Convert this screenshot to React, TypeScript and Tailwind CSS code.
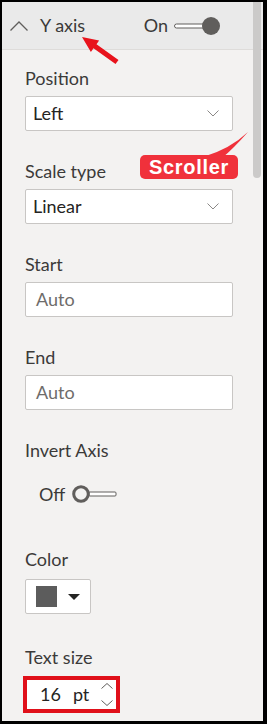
import React from 'react';

const Chevron = ({ className = '' }: { className?: string }) => (
  <svg width="12" height="7" viewBox="0 0 12 7" className={className}>
    <path d="M0.5 0.5 L6 6 L11.5 0.5" fill="none" stroke="#8a8886" strokeWidth="1" />
  </svg>
);

const Label = ({ text, className = '' }: { text: string; className?: string }) => (
  <div className={`h-6 leading-6 text-[18px] text-[#3b3a39] ${className}`}>{text}</div>
);

const Select = ({ value }: { value: string }) => (
  <div className="mt-[6px] w-[208px] h-[35px] bg-white border border-[#c8c6c4] rounded-[2px] flex items-center pl-[7px] pr-[13px]">
    <span className="text-[18px] text-[#252423]">{value}</span>
    <Chevron className="ml-auto" />
  </div>
);

const Input = ({ placeholder }: { placeholder: string }) => (
  <div className="mt-[6px] w-[208px] h-[35px] bg-white border border-[#c8c6c4] rounded-[2px] flex items-center pl-[10px]">
    <span className="text-[18px] text-[#6e6c6a]">{placeholder}</span>
  </div>
);

export default function App() {
  return (
    <div className="w-[267px] h-[724px] relative overflow-hidden bg-[#f3f2f1] border-black border-t-2 border-l-2 border-r-4 border-b-[3px] font-['Lato','Open_Sans',sans-serif]">
      {/* header */}
      <div className="h-[48px] flex items-center bg-[#eaeaea] border-b border-[#dedcda] pl-[8px] pr-[43px]">
        <svg width="18" height="10" viewBox="0 0 18 10">
          <path d="M0.5 9.5 L9 1 L17.5 9.5" fill="none" stroke="#605e5c" strokeWidth="1.3" />
        </svg>
        <span className="ml-3 text-[18px] text-[#3b3a39]">Y axis</span>
        <span className="ml-auto text-[18px] text-[#3b3a39]">On</span>
        <svg width="46" height="18" viewBox="0 0 46 18" className="ml-[6px]">
          <rect x="0.5" y="7" width="32" height="4" rx="2" fill="#fff" stroke="#605e5c" strokeWidth="1" />
          <circle cx="37" cy="9" r="9" fill="#605e5c" />
        </svg>
      </div>

      {/* body */}
      <div className="pl-[23px] pt-[16px]">
        <Label text="Position" />
        <Select value="Left" />

        <Label text="Scale type" className="mt-[28px]" />
        <Select value="Linear" />

        <Label text="Start" className="mt-[28px]" />
        <Input placeholder="Auto" />

        <Label text="End" className="mt-[28px]" />
        <Input placeholder="Auto" />

        <Label text="Invert Axis" className="mt-[28px]" />
        <div className="mt-[20px] h-6 flex items-center pl-[14px]">
          <span className="text-[18px] text-[#3b3a39]">Off</span>
          <svg width="45" height="18" viewBox="0 0 45 18" className="ml-[7px]">
            <rect x="17" y="7" width="27" height="4" rx="1" fill="#fff" stroke="#605e5c" strokeWidth="1" />
            <circle cx="9" cy="9" r="7.3" fill="#f3f2f1" stroke="#605e5c" strokeWidth="3" />
          </svg>
        </div>

        <Label text="Color" className="mt-[41px]" />
        <div className="mt-[8px] w-[66px] h-[35px] bg-white border border-[#c8c6c4] rounded-[2px] flex items-center pl-[10px]">
          <div className="w-[21px] h-[21px] bg-[#5c5c5c]" />
          <svg width="12" height="6" viewBox="0 0 12 6" className="ml-[11px]">
            <path d="M0 0 H12 L6 6 Z" fill="#252423" />
          </svg>
        </div>

        <Label text="Text size" className="mt-[31px]" />
        <div className="mt-[7px] -ml-[2px] w-[97px] h-[37px] bg-white border-4 border-[#e0101a] flex items-center pl-[13px]">
          <span className="text-[18px] text-[#252423]">16</span>
          <span className="ml-[12px] text-[18px] text-[#252423]">pt</span>
          <div className="ml-auto mr-[3px] flex flex-col gap-[11px]">
            <svg width="12" height="6" viewBox="0 0 12 6">
              <path d="M0.5 5.5 L6 0.5 L11.5 5.5" fill="none" stroke="#605e5c" strokeWidth="1" />
            </svg>
            <svg width="12" height="6" viewBox="0 0 12 6">
              <path d="M0.5 0.5 L6 5.5 L11.5 0.5" fill="none" stroke="#605e5c" strokeWidth="1" />
            </svg>
          </div>
        </div>
      </div>

      {/* scrollbar thumb */}
      <div className="absolute left-[251px] top-0 w-[8px] h-[176px] rounded-b-full bg-[#cbcac9]" />

      {/* annotations */}
      <svg width="267" height="724" className="absolute -left-[2px] -top-[2px] pointer-events-none">
        <polygon
          points="82,37 99.1,40.6 96.5,44.3 118.5,60 115.5,64 93.5,48.3 90.9,52"
          fill="#e8131c"
        />
        <path d="M203 157 Q230 149 248 132 Q232 150 223 157 Z" fill="#f0313b" />
      </svg>
      <div className="absolute left-[138px] top-[153px] w-[98px] h-[24px] rounded-[5px] bg-[#f0313b] flex items-center justify-center">
        <span className="text-white font-bold text-[20px] leading-none tracking-[0.7px] font-['Liberation_Sans',Arial,sans-serif]">
          Scroller
        </span>
      </div>
    </div>
  );
}
